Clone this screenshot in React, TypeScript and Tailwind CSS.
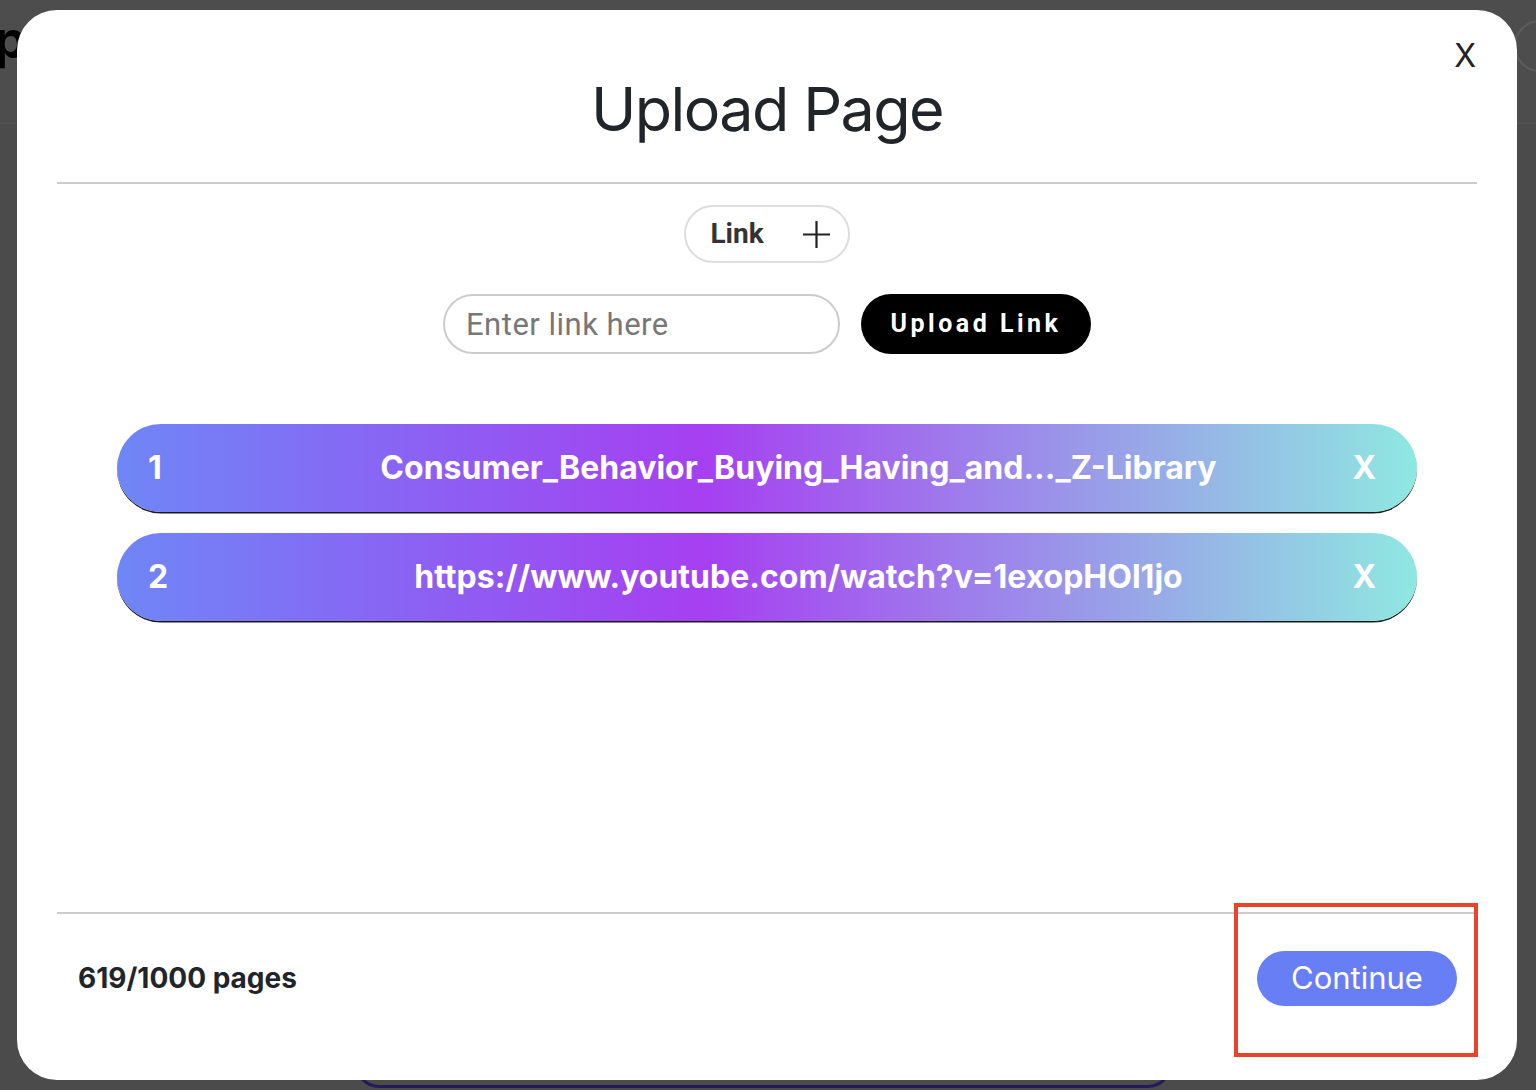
import React from "react";

const links = [
  { id: 1, label: "Consumer_Behavior_Buying_Having_and..._Z-Library" },
  { id: 2, label: "https://www.youtube.com/watch?v=1exopHOl1jo" },
];

function PlusIcon() {
  return (
    <svg width="29" height="29" viewBox="0 0 29 29" fill="none">
      <path d="M14.5 1v27M1 14.5h27" stroke="#222" strokeWidth="2.2" />
    </svg>
  );
}

function LinkRow({ id, label }: { id: number; label: string }) {
  return (
    <div className="flex h-[88px] items-center rounded-full bg-[linear-gradient(90deg,#6f86f6_0%,#a63ff1_45%,#8fe8e1_100%)] pl-[31px] pr-[41px] text-[32px] font-bold text-white shadow-[0_1.5px_0.5px_rgba(0,0,0,0.9)]">
      <span className="w-[100px]">{id}</span>
      <span className="flex-1 text-center">{label}</span>
      <span className="w-[27px] text-right">X</span>
    </div>
  );
}

export default function App() {
  return (
    <div className="relative h-[1090px] w-full overflow-hidden bg-[#4b4b4b] font-['Inter','Liberation_Sans',sans-serif]">
      {/* page behind the overlay */}
      <div className="flex h-[124px] items-start border-b border-[#555] bg-[#4d4d4d]">
        <span className="-ml-[6px] mt-[14px] text-[52px] font-bold leading-none text-black">p</span>
        <div className="ml-auto mr-[-30px] mt-[20px] h-[52px] w-[52px] rounded-full border-2 border-[#5c5c5c]" />
      </div>
      <div className="absolute left-[355px] top-[1000px] h-[88px] w-[817px] rounded-[24px] border-[3px] border-[#241a5a]" />

      {/* modal */}
      <div className="absolute left-[17px] top-[10px] flex h-[1070px] w-[1500px] flex-col rounded-[40px] bg-white px-[40px]">
        <button className="absolute right-[41px] top-[22px] text-[32px] font-normal text-[#222]">X</button>
        <h1 className="mt-[62px] text-center text-[61px] leading-[74px] font-normal tracking-[-1.6px] text-[#212529]">Upload Page</h1>
        <div className="mt-[36px] h-[2px] bg-[#cccccc]" />

        <div className="mt-[21px] flex justify-center font-['Roboto','Liberation_Sans',sans-serif]">
          <button className="flex h-[58px] items-center rounded-full border-2 border-[#dddddd] pl-[24px] pr-[17px] text-[28px] font-bold text-[#333]">
            <span>Link</span>
            <span className="ml-[38px]"><PlusIcon /></span>
          </button>
        </div>

        <div className="mt-[31px] flex justify-center gap-[21px] font-['Roboto','Liberation_Sans',sans-serif]">
          <input
            placeholder="Enter link here"
            className="h-[60px] w-[397px] rounded-full border-2 border-[#cccccc] px-[21px] text-[31px] tracking-[0.5px] text-[#333] placeholder:text-[#777] outline-none"
          />
          <button className="h-[60px] w-[230px] rounded-full bg-black text-[25px] font-bold tracking-[3.5px] text-white">
            Upload Link
          </button>
        </div>

        <div className="mt-[70px] flex flex-col gap-[21px] px-[60px]">
          {links.map((l) => (
            <LinkRow key={l.id} id={l.id} label={l.label} />
          ))}
        </div>

        <div className="mt-auto h-[2px] bg-[#cccccc]" />
        <div className="flex h-[166px] items-center justify-between pb-[38px] pl-[21px] pr-[20px]">
          <span className="text-[28px] font-bold text-[#212529]">619/1000 pages</span>
          <button className="h-[55px] w-[200px] rounded-full bg-[#677ef4] text-[31px] font-normal text-white">
            Continue
          </button>
        </div>
      </div>

      {/* annotation */}
      <div className="absolute left-[1234px] top-[903px] h-[154px] w-[244px] border-[4px] border-[#e8442b]" />
    </div>
  );
}
